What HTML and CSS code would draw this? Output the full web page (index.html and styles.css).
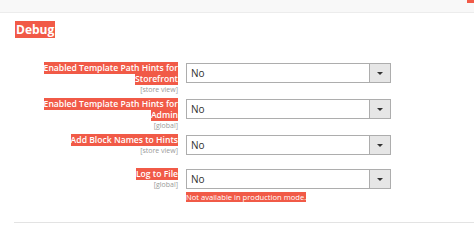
FILE: index.html
```html
<!DOCTYPE html>
<html lang="en">
<head>
    <meta charset="UTF-8">
    <meta name="viewport" content="width=device-width, initial-scale=1.0">
    <title>Debug</title>
    <link rel="stylesheet" href="styles.css">
</head>
<body>
    <!-- Barre du haut -->
    <div class="topbar"><span class="corner"></span></div>

    <div class="section">
        <h2 class="title"><span class="mark">Debug</span></h2>

        <!-- Champs -->
        <div class="row">
            <div class="label">
                <span class="mark">Enabled Template Path Hints for Storefront</span>
                <div class="scope">[store view]</div>
            </div>
            <div class="field">
                <div class="select"><span class="value">No</span><span class="arrow"></span></div>
            </div>
        </div>

        <div class="row">
            <div class="label">
                <span class="mark">Enabled Template Path Hints for Admin</span>
                <div class="scope">[global]</div>
            </div>
            <div class="field">
                <div class="select"><span class="value">No</span><span class="arrow"></span></div>
            </div>
        </div>

        <div class="row">
            <div class="label">
                <span class="mark">Add Block Names to Hints</span>
                <div class="scope">[store view]</div>
            </div>
            <div class="field">
                <div class="select"><span class="value">No</span><span class="arrow"></span></div>
            </div>
        </div>

        <div class="row">
            <div class="label">
                <span class="mark">Log to File</span>
                <div class="scope">[global]</div>
            </div>
            <div class="field">
                <div class="select"><span class="value">No</span><span class="arrow"></span></div>
                <div class="note"><span class="mark">Not available in production mode.</span></div>
            </div>
        </div>
    </div>

    <div class="bottom-line"></div>
</body>
</html>
```

FILE: styles.css
```css
body {
    margin: 0;
    background-color: #fff;
    font-family: "Open Sans", Arial, sans-serif;
    color: #303030;
    width: 474px;
    height: 226px;
    overflow: hidden;
}
.topbar {
    height: 12px;
    background-color: #f8f8f8;
    border-bottom: 1px solid #ececec;
    display: flex;
    justify-content: flex-end;
}
.corner {
    width: 7px;
    height: 3px;
    background-color: #f15a47;
}
.section {
    padding-left: 15px;
}
.mark {
    background-color: #f15a47;
    color: #fff;
}
.title {
    margin: 10px 0 26px 0;
    font-size: 12px;
    font-weight: 700;
    line-height: 14px;
}
.title .mark {
    padding: 0 1px;
}
.row {
    display: flex;
    gap: 8px;
    min-height: 28px;
    margin-bottom: 6px;
}
.label {
    width: 163px;
    text-align: right;
    font-size: 8.6px;
    font-weight: 600;
    line-height: 11px;
}
.scope {
    font-size: 7px;
    font-weight: 400;
    line-height: 7px;
    color: #999;
    margin-top: 1px;
}
.field {
    width: 205px;
}
.select {
    display: flex;
    height: 18px;
    border: 1px solid #adadad;
    background-color: #fff;
}
.value {
    flex: 1;
    padding-left: 4px;
    font-size: 10px;
    line-height: 18px;
}
.arrow {
    width: 20px;
    background-color: #e6e6e6;
    border-left: 1px solid #adadad;
    display: flex;
    align-items: center;
    justify-content: center;
}
.arrow::after {
    content: "";
    border-left: 3px solid transparent;
    border-right: 3px solid transparent;
    border-top: 3px solid #333;
    margin-top: 1px;
}
.note {
    margin-top: 3px;
    font-size: 7.6px;
    line-height: 10px;
}
.bottom-line {
    margin: 20px 0 0 14px;
    border-top: 1px solid #e3e3e3;
}
```
